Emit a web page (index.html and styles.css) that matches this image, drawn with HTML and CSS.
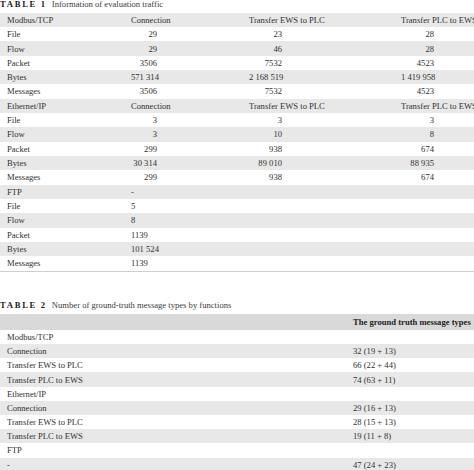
FILE: index.html
```html
<!DOCTYPE html>
<html>
<head>
<meta charset="utf-8">
<link rel="stylesheet" href="styles.css">
</head>
<body>
<div class="page">
  <div class="caption caption-1"><span class="tag">TABLE 1</span><span class="ctext">Information of evaluation traffic</span></div>
  <div class="t1">
    <div class="row g"><div class="lab">Modbus/TCP</div><div class="c2">Connection</div><div class="c3">Transfer EWS to PLC</div><div class="c4">Transfer PLC to EWS</div></div>
    <div class="row"><div class="lab">File</div><div class="c2"><span class="n2">29</span></div><div class="c3"><span class="n3">23</span></div><div class="c4"><span class="n4">28</span></div></div>
    <div class="row g"><div class="lab">Flow</div><div class="c2"><span class="n2">29</span></div><div class="c3"><span class="n3">46</span></div><div class="c4"><span class="n4">28</span></div></div>
    <div class="row"><div class="lab">Packet</div><div class="c2"><span class="n2">3506</span></div><div class="c3"><span class="n3">7532</span></div><div class="c4"><span class="n4">4523</span></div></div>
    <div class="row g"><div class="lab">Bytes</div><div class="c2"><span class="n2">571 314</span></div><div class="c3"><span class="n3">2 168 519</span></div><div class="c4"><span class="n4">1 419 958</span></div></div>
    <div class="row"><div class="lab">Messages</div><div class="c2"><span class="n2">3506</span></div><div class="c3"><span class="n3">7532</span></div><div class="c4"><span class="n4">4523</span></div></div>
    <div class="row g"><div class="lab">Ethernet/IP</div><div class="c2">Connection</div><div class="c3">Transfer EWS to PLC</div><div class="c4">Transfer PLC to EWS</div></div>
    <div class="row"><div class="lab">File</div><div class="c2"><span class="n2">3</span></div><div class="c3"><span class="n3">3</span></div><div class="c4"><span class="n4">3</span></div></div>
    <div class="row g"><div class="lab">Flow</div><div class="c2"><span class="n2">3</span></div><div class="c3"><span class="n3">10</span></div><div class="c4"><span class="n4">8</span></div></div>
    <div class="row"><div class="lab">Packet</div><div class="c2"><span class="n2">299</span></div><div class="c3"><span class="n3">938</span></div><div class="c4"><span class="n4">674</span></div></div>
    <div class="row g"><div class="lab">Bytes</div><div class="c2"><span class="n2">30 314</span></div><div class="c3"><span class="n3">89 010</span></div><div class="c4"><span class="n4">88 935</span></div></div>
    <div class="row"><div class="lab">Messages</div><div class="c2"><span class="n2">299</span></div><div class="c3"><span class="n3">938</span></div><div class="c4"><span class="n4">674</span></div></div>
    <div class="row g"><div class="lab">FTP</div><div class="c2">-</div><div class="c3"></div><div class="c4"></div></div>
    <div class="row"><div class="lab">File</div><div class="c2">5</div><div class="c3"></div><div class="c4"></div></div>
    <div class="row g"><div class="lab">Flow</div><div class="c2">8</div><div class="c3"></div><div class="c4"></div></div>
    <div class="row"><div class="lab">Packet</div><div class="c2">1139</div><div class="c3"></div><div class="c4"></div></div>
    <div class="row g"><div class="lab">Bytes</div><div class="c2">101 524</div><div class="c3"></div><div class="c4"></div></div>
    <div class="row last"><div class="lab">Messages</div><div class="c2">1139</div><div class="c3"></div><div class="c4"></div></div>
  </div>

  <div class="caption caption-2"><span class="tag">TABLE 2</span><span class="ctext">Number of ground-truth message types by functions</span></div>
  <div class="t2">
    <div class="row2 head"><div class="lab"></div><div class="v">The ground truth message types</div></div>
    <div class="row2"><div class="lab">Modbus/TCP</div><div class="v"></div></div>
    <div class="row2 g"><div class="lab">Connection</div><div class="v">32 (19 + 13)</div></div>
    <div class="row2"><div class="lab">Transfer EWS to PLC</div><div class="v">66 (22 + 44)</div></div>
    <div class="row2 g"><div class="lab">Transfer PLC to EWS</div><div class="v">74 (63 + 11)</div></div>
    <div class="row2"><div class="lab">Ethernet/IP</div><div class="v"></div></div>
    <div class="row2 g"><div class="lab">Connection</div><div class="v">29 (16 + 13)</div></div>
    <div class="row2"><div class="lab">Transfer EWS to PLC</div><div class="v">28 (15 + 13)</div></div>
    <div class="row2 g"><div class="lab">Transfer PLC to EWS</div><div class="v">19 (11 + 8)</div></div>
    <div class="row2"><div class="lab">FTP</div><div class="v"></div></div>
    <div class="row2 g"><div class="lab">-</div><div class="v">47 (24 + 23)</div></div>
  </div>
</div>
</body>
</html>
```
FILE: styles.css
```css
html, body {
  margin: 0;
  padding: 0;
  background: #ffffff;
  overflow: hidden;
}
.page {
  width: 474px;
  height: 470px;
  overflow: hidden;
  font-family: "Liberation Serif", "Times New Roman", serif;
  font-size: 8.6px;
  color: #303030;
}
.caption {
  display: flex;
  align-items: flex-end;
  white-space: nowrap;
}
.caption-1 {
  height: 8px;
  margin-bottom: 4.7px;
}
.caption-2 {
  margin-top: 28px;
  height: 9px;
  margin-bottom: 5px;
}
.tag {
  font-weight: bold;
  letter-spacing: 1.7px;
  color: #1a1a1a;
  font-size: 8.6px;
  line-height: 8px;
}
.ctext {
  margin-left: 5px;
  line-height: 8px;
  color: #3c3c3c;
}
.t1 {
  width: 520px;
}
.row {
  display: grid;
  grid-template-columns: 131px 118px 152px 1fr;
  height: 14.33px;
  align-items: center;
  white-space: nowrap;
}
.g {
  background: #e8e8e8;
}
.last {
  border-bottom: 1px solid #cfcfcf;
}
.lab {
  padding-left: 7px;
}
.n2, .n3, .n4 {
  display: inline-block;
  text-align: right;
}
.n2 { width: 26px; }
.n3 { width: 33px; }
.n4 { width: 33px; }
.t2 {
  width: 520px;
}
.row2 {
  display: grid;
  grid-template-columns: 353px 1fr;
  height: 14.2px;
  align-items: center;
  white-space: nowrap;
}
.row2.head {
  height: 16.3px;
  background: #d9d9d9;
  font-weight: bold;
  color: #1e1e1e;
}
```
